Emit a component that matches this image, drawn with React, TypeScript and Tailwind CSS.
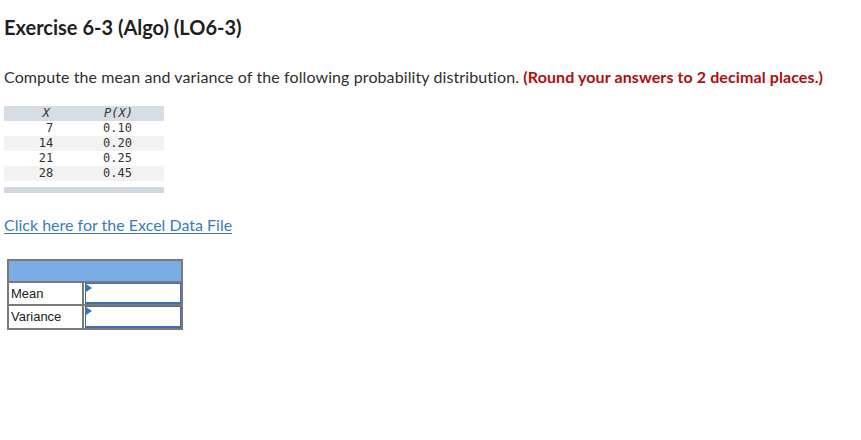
import React from "react";

const rows = [
  [" 7", "0.10"],
  ["14", "0.20"],
  ["21", "0.25"],
  ["28", "0.45"],
];

function AnswerCell() {
  return (
    <div className="relative h-full border border-[#3d6fae] border-b-2 bg-white">
      <svg className="absolute left-0 top-0" width="6" height="8" viewBox="0 0 6 8">
        <polygon points="0,0 6,4 0,8" fill="#3d73b5" />
      </svg>
    </div>
  );
}

export default function App() {
  return (
    <div className="w-[861px] h-[440px] bg-white text-[#2b2b2b]" style={{ fontFamily: "Lato, 'Open Sans', sans-serif" }}>
      <div className="pl-[4px] pt-[14px]">
        <h1 className="text-[20px] font-bold leading-[26px] text-[#1f1f1f]">Exercise 6-3 (Algo) (LO6-3)</h1>
        <p className="mt-[27px] text-[16px] leading-[20px] tracking-[0.1px] text-[#2f2f2f]">
          Compute the mean and variance of the following probability distribution.{" "}
          <span className="font-bold text-[#b30d0d]">(Round your answers to 2 decimal places.)</span>
        </p>

        <div className="mt-[19px] w-[160px] text-[12px] leading-[15px] text-[#333]" style={{ fontFamily: "'DejaVu Sans Mono', monospace" }}>
          <div className="flex bg-[#d8dce5]">
            <div className="w-[84px] text-center italic">X</div>
            <div className="pl-[16px] italic">P(X)</div>
          </div>
          {rows.map((r, i) => (
            <div key={i} className={`flex ${i % 2 === 1 ? "bg-[#f3f3f3]" : "bg-white"}`}>
              <div className="w-[84px] text-center whitespace-pre">{r[0]}</div>
              <div className="pl-[15px]">{r[1]}</div>
            </div>
          ))}
          <div className="h-[6px]" />
          <div className="h-[6px] bg-[#d3d7e0]" />
        </div>

        <a className="mt-[22px] block w-fit text-[16px] leading-[20px] text-[#3a7bc0] underline underline-offset-2" href="#">
          Click here for the Excel Data File
        </a>

        <div className="mt-[24px] ml-[3px] w-[176px] border-2 border-[#7a7a7a]" style={{ fontFamily: "'Liberation Sans', Arial, sans-serif" }}>
          <div className="h-[22px] bg-[#7aade6] border-b-2 border-[#7a7a7a]" />
          <div className="flex h-[23px] border-b-2 border-[#7a7a7a]">
            <div className="w-[75px] border-r-2 border-[#7a7a7a] pl-[2px] text-[13px] leading-[22px] text-[#222]">Mean</div>
            <div className="flex-1 pl-[1px]"><AnswerCell /></div>
          </div>
          <div className="flex h-[22px]">
            <div className="w-[75px] border-r-2 border-[#7a7a7a] pl-[2px] text-[13px] leading-[22px] text-[#222]">Variance</div>
            <div className="flex-1 pl-[1px]"><AnswerCell /></div>
          </div>
        </div>
      </div>
    </div>
  );
}
